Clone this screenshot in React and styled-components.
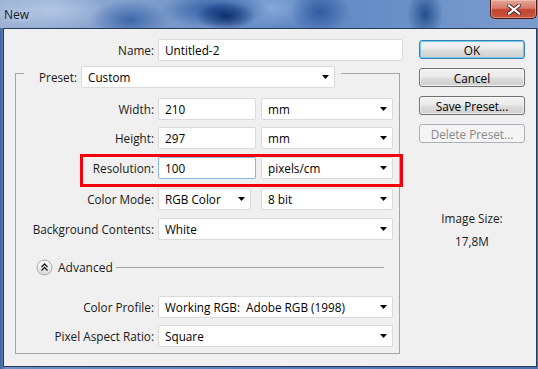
import React from "react";
import styled, { createGlobalStyle } from "styled-components";

const GlobalStyle = createGlobalStyle`
  html, body {
    margin: 0;
    padding: 0;
    background: #ffffff;
  }
  body {
    font-family: "Open Sans", "Noto Sans", sans-serif;
    font-size: 11.75px;
    color: #1a1a1a;
  }
`;

const Window = styled.div`
  box-sizing: border-box;
  width: 538px;
  height: 369px;
  display: flex;
  flex-direction: column;
  padding: 0 1px 2px 3px;
  background: linear-gradient(90deg, #3f65a0 0%, #6b8fc6 1%, #5a80bb 50%, #4c72ad 100%);
`;

const TitleBar = styled.div`
  height: 28px;
  margin: 0 -1px 0 -3px;
  padding-left: 4px;
  display: flex;
  justify-content: space-between;
  align-items: flex-start;
  flex: none;
  background:
    radial-gradient(ellipse 30px 14px at 226px 16px, #0f2f6c 0%, rgba(15, 47, 108, 0) 100%),
    radial-gradient(ellipse 55px 18px at 215px 10px, #2a5aa3 0%, rgba(42, 90, 163, 0) 100%),
    radial-gradient(ellipse 40px 20px at 130px 20px, #3e68ab 0%, rgba(62, 104, 171, 0) 100%),
    radial-gradient(ellipse 30px 22px at 320px 12px, #2f5b9f 0%, rgba(47, 91, 159, 0) 100%),
    radial-gradient(ellipse 18px 26px at 425px 14px, #24508f 0%, rgba(36, 80, 143, 0) 100%),
    radial-gradient(ellipse 60px 20px at 50px 10px, #b4c6e4 0%, rgba(180, 198, 228, 0) 100%),
    radial-gradient(ellipse 50px 20px at 270px 8px, #86a7d8 0%, rgba(134, 167, 216, 0) 100%),
    linear-gradient(90deg, #9eb3d6 0%, #7c9bcb 30%, #5f86c2 55%, #6f93c9 80%, #7b9cce 100%);
`;

const Title = styled.span`
  margin-top: 6px;
  font-family: "Open Sans", sans-serif;
  font-size: 12px;
  color: #111827;
  text-shadow: 0 0 6px rgba(255, 255, 255, 0.8);
`;

const CloseButton = styled.div`
  box-sizing: border-box;
  width: 47px;
  height: 19px;
  margin-right: 1px;
  border: 1px solid #4a1810;
  border-top: none;
  border-radius: 0 0 5px 5px;
  display: flex;
  align-items: center;
  justify-content: center;
  background: linear-gradient(180deg, #e4a89b 0%, #d67a68 45%, #c2442f 55%, #c8553c 100%);
  box-shadow: inset 0 0 0 1px rgba(255, 210, 200, 0.45);
`;

const Content = styled.div`
  flex: 1;
  box-sizing: border-box;
  display: flex;
  background: #f0f0f0;
  border: 1px solid #263a5c;
`;

const FormColumn = styled.div`
  width: 399px;
  padding-top: 10px;
  display: flex;
  flex-direction: column;
`;

const Row = styled.div`
  display: flex;
  align-items: center;
  margin-top: ${(p) => p.$mt || 0}px;
  position: relative;
  ${(p) =>
    p.$highlight &&
    `
    &::after {
      content: "";
      position: absolute;
      left: 64px;
      top: -3px;
      width: 317px;
      height: 27px;
      border: 3px solid #f2000c;
    }
  `}
`;

const Label = styled.span`
  flex: none;
  width: ${(p) => p.$w}px;
  margin-right: 4px;
  text-align: right;
  white-space: nowrap;
`;

const Box = styled.div`
  box-sizing: border-box;
  flex: none;
  width: ${(p) => p.$w}px;
  height: 22px;
  margin-right: ${(p) => p.$mr || 0}px;
  padding: 0 5px 0 6px;
  display: flex;
  align-items: center;
  justify-content: space-between;
  background: #ffffff;
  border: 1px solid ${(p) => (p.$focus ? "#8cb6e2" : "#dadada")};
  border-radius: 2px;
  color: #000000;
  white-space: nowrap;
`;

const Group = styled.div`
  margin-left: 11px;
  width: 385px;
  display: flex;
  flex-direction: column;
`;

const GroupHeader = styled.div`
  display: flex;
  margin-top: 5px;
`;

const Rule = styled.div`
  box-sizing: border-box;
  margin-top: 7px;
  border-top: 1px solid #a5a5a5;
  ${(p) => (p.$side === "left" ? "width: 9px; border-left: 1px solid #a5a5a5;" : "flex: 1; margin-left: 6px; border-right: 1px solid #a5a5a5;")}
`;

const Legend = styled.div`
  display: flex;
  align-items: center;
  padding-left: 13px;
`;

const GroupBody = styled.div`
  border: 1px solid #a5a5a5;
  border-top: none;
  padding-bottom: 6px;
  display: flex;
  flex-direction: column;
`;

const AdvancedRow = styled.div`
  display: flex;
  align-items: center;
  margin-top: 19px;
  padding-left: 20px;
  padding-right: 15px;
`;

const AdvancedText = styled.span`
  margin-left: 5px;
  font-size: 12px;
`;

const Line = styled.div`
  flex: 1;
  margin-left: 3px;
  border-top: 1px solid #a5a5a5;
`;

const SideColumn = styled.div`
  margin-left: 16px;
  width: 106px;
  padding-top: 11px;
  display: flex;
  flex-direction: column;
  gap: 9px;
`;

const Button = styled.div`
  box-sizing: border-box;
  height: 19px;
  display: flex;
  align-items: center;
  justify-content: center;
  border-radius: 3px;
  border: 1px solid ${(p) => (p.$primary ? "#3c7fb1" : p.$disabled ? "#adb2b5" : "#707070")};
  color: ${(p) => (p.$disabled ? "#8a8a8a" : "#000000")};
  background: ${(p) =>
    p.$disabled
      ? "#f4f4f4"
      : "linear-gradient(180deg, #f2f2f2 0%, #ebebeb 48%, #dddddd 52%, #cfcfcf 100%)"};
  box-shadow: ${(p) =>
    p.$primary ? "inset 0 0 0 1px #6fcaf3" : p.$disabled ? "none" : "inset 0 0 0 1px rgba(255,255,255,0.7)"};
`;

const SizeInfo = styled.div`
  margin-top: 58px;
  display: flex;
  flex-direction: column;
  align-items: center;
  gap: 7px;
  line-height: 16px;
`;

const Arrow = () => (
  <svg width="7" height="4" viewBox="0 0 7 4">
    <polygon points="0,0 7,0 3.5,4" fill="#000" />
  </svg>
);

const Select = ({ w, mr, children }) => (
  <Box $w={w} $mr={mr}>
    <span>{children}</span>
    <Arrow />
  </Box>
);

const CloseGlyph = () => (
  <svg width="14" height="11" viewBox="0 0 14 11">
    <path d="M2 1.5 L12 9.5 M12 1.5 L2 9.5" stroke="#4a2420" strokeWidth="4" strokeLinecap="square" />
    <path d="M2 1.5 L12 9.5 M12 1.5 L2 9.5" stroke="#ffffff" strokeWidth="2.2" strokeLinecap="square" />
  </svg>
);

const CollapseIcon = () => (
  <svg width="17" height="17" viewBox="0 0 17 17">
    <defs>
      <linearGradient id="cg" x1="0" y1="0" x2="0" y2="1">
        <stop offset="0" stopColor="#ffffff" />
        <stop offset="1" stopColor="#d9d9d9" />
      </linearGradient>
    </defs>
    <circle cx="8.5" cy="8.5" r="7.5" fill="url(#cg)" stroke="#a8a8a8" />
    <path d="M5.5 8 L8.5 5 L11.5 8 M5.5 11.5 L8.5 8.5 L11.5 11.5" fill="none" stroke="#1a1a1a" strokeWidth="1.3" />
  </svg>
);

export default function App() {
  return (
    <>
      <GlobalStyle />
      <Window>
        <TitleBar>
          <Title>New</Title>
          <CloseButton>
            <CloseGlyph />
          </CloseButton>
        </TitleBar>
        <Content>
          <FormColumn>
            <Row>
              <Label $w={150}>Name:</Label>
              <Box $w={245}>Untitled-2</Box>
            </Row>
            <Group>
              <GroupHeader>
                <Rule $side="left" />
                <Legend>
                  <Label $w={40}>Preset:</Label>
                  <Select w={254}>Custom</Select>
                </Legend>
                <Rule $side="right" />
              </GroupHeader>
              <GroupBody>
                <Row $mt={10}>
                  <Label $w={138}>Width:</Label>
                  <Box $w={98} $mr={5}>210</Box>
                  <Select w={132}>mm</Select>
                </Row>
                <Row $mt={7}>
                  <Label $w={138}>Height:</Label>
                  <Box $w={98} $mr={5}>297</Box>
                  <Select w={132}>mm</Select>
                </Row>
                <Row $mt={8} $highlight>
                  <Label $w={138}>Resolution:</Label>
                  <Box $w={98} $mr={5} $focus>100</Box>
                  <Select w={132}>pixels/cm</Select>
                </Row>
                <Row $mt={9}>
                  <Label $w={138}>Color Mode:</Label>
                  <Select w={93} mr={10}>RGB Color</Select>
                  <Select w={132}>8 bit</Select>
                </Row>
                <Row $mt={8}>
                  <Label $w={138}>Background Contents:</Label>
                  <Select w={235}>White</Select>
                </Row>
                <AdvancedRow>
                  <CollapseIcon />
                  <AdvancedText>Advanced</AdvancedText>
                  <Line />
                </AdvancedRow>
                <Row $mt={20}>
                  <Label $w={138}>Color Profile:</Label>
                  <Select w={235}>Working RGB:&nbsp; Adobe RGB (1998)</Select>
                </Row>
                <Row $mt={7}>
                  <Label $w={138}>Pixel Aspect Ratio:</Label>
                  <Select w={235}>Square</Select>
                </Row>
              </GroupBody>
            </Group>
          </FormColumn>
          <SideColumn>
            <Button $primary>OK</Button>
            <Button>Cancel</Button>
            <Button>Save Preset...</Button>
            <Button $disabled>Delete Preset...</Button>
            <SizeInfo>
              <span>Image Size:</span>
              <span>17,8M</span>
            </SizeInfo>
          </SideColumn>
        </Content>
      </Window>
    </>
  );
}
